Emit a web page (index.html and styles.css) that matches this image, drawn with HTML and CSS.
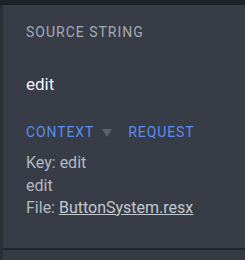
FILE: index.html
```html
<!DOCTYPE html>
<html>
<head>
<meta charset="utf-8">
<link rel="stylesheet" href="styles.css">
</head>
<body>
<div class="topbar"></div>
<div class="main">
  <div class="strip"></div>
  <div class="panel">
    <div class="content">
      <div class="label">SOURCE STRING</div>
      <div class="source">edit</div>
      <div class="tabs">
        <span class="tab">CONTEXT</span>
        <span class="caret"></span>
        <span class="tab">REQUEST</span>
      </div>
      <div class="info">
        <div>Key: edit</div>
        <div>edit</div>
        <div>File: <a class="file">ButtonSystem.resx</a></div>
      </div>
    </div>
    <div class="footer"></div>
  </div>
</div>
</body>
</html>
```
FILE: styles.css
```css
html, body { margin: 0; padding: 0; }
body {
  width: 245px;
  height: 260px;
  overflow: hidden;
  background: #373c46;
  font-family: Roboto, "Noto Sans", sans-serif;
}
.topbar { height: 5px; background: #1f2228; }
.main { display: flex; height: 255px; }
.strip { width: 3px; background: #2a2e35; flex: none; }
.panel { flex: 1; display: flex; flex-direction: column; }
.content { height: 243px; padding: 0 0 0 23px; box-sizing: border-box; }
.label {
  margin-top: 18px;
  font-size: 14px;
  line-height: 18px;
  letter-spacing: 1px;
  color: #a3abb8;
}
.source {
  margin-top: 32px;
  font-size: 17px;
  line-height: 22px;
  color: #f2f3f5;
}
.tabs {
  margin-top: 28px;
  display: flex;
  align-items: center;
  font-size: 14px;
  line-height: 19px;
  letter-spacing: 0.9px;
  color: #5b8ef0;
}
.caret {
  width: 0; height: 0;
  border-left: 5px solid transparent;
  border-right: 5px solid transparent;
  border-top: 8px solid #5d636d;
  margin: 1px 16px 0 8px;
}
.info {
  margin-top: 10px;
  font-size: 16px;
  line-height: 22.5px;
  color: #b4bac4;
}
.file { color: #c4c9d1; text-decoration: underline; }
.footer {
  border-top: 2px solid #23262c;
  flex: 1;
  background: #363a43;
}
```
